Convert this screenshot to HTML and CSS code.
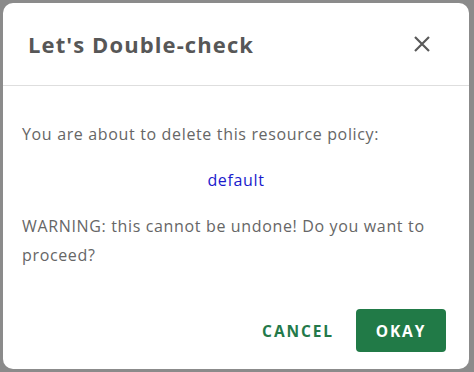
FILE: index.html
```html
<html>
<head>
	<link rel="stylesheet" href="styles.css">
</head>

<body>
	<div class="backdrop">
		<div class="dialog">
			<div class="dialog-header">
				<h1>Let's Double-check</h1>
				<button class="close-button" aria-label="Close">
					<svg width="18" height="18" viewBox="0 0 18 18">
						<path d="M2 2 L16 16 M16 2 L2 16" stroke="#5a5a5a" stroke-width="2.2" fill="none"/>
					</svg>
				</button>
			</div>

			<div class="dialog-body">
				<p>You are about to delete this resource policy:</p>
				<p class="target-name">default</p>
				<p>WARNING: this cannot be undone! Do you want to proceed?</p>
			</div>

			<div class="dialog-footer">
				<button class="text-button">Cancel</button>
				<button class="primary-button">Okay</button>
			</div>
		</div>
	</div>
</body>

</html>
```

FILE: styles.css
```css
html, body {
	margin: 0;
	padding: 0;
	height: 100%;
}

body {
	background: #8b8b8b;
	font-family: 'Open Sans', 'Noto Sans', sans-serif;
	overflow: hidden;
}

.backdrop {
	box-sizing: border-box;
	height: 100%;
	padding: 3px 5px 3px 3px;
	display: flex;
}

.dialog {
	flex: 1;
	background: #ffffff;
	border-radius: 10px;
	display: flex;
	flex-direction: column;
}

.dialog-header {
	height: 82px;
	display: flex;
	align-items: center;
	justify-content: space-between;
	padding: 0 38px 0 25px;
	border-bottom: 1px solid #dedede;
}

h1 {
	margin: 0;
	font-size: 22px;
	font-weight: 700;
	color: #575757;
	letter-spacing: 1.1px;
}

.close-button {
	background: none;
	border: none;
	padding: 0;
	width: 18px;
	height: 18px;
	cursor: pointer;
}

.close-button svg {
	display: block;
}

.dialog-body {
	padding: 34px 19px 0 19px;
	color: #666666;
	font-size: 16px;
	line-height: 29px;
	letter-spacing: 0.65px;
}

.dialog-body p {
	margin: 0 0 17px 0;
}

.target-name {
	text-align: center;
	color: #1a1acc;
}

.dialog-footer {
	margin-top: auto;
	display: flex;
	justify-content: flex-end;
	align-items: center;
	gap: 10px;
	padding: 0 23px 17px 0;
}

.text-button,
.primary-button {
	font-family: inherit;
	font-size: 15.5px;
	font-weight: 700;
	letter-spacing: 1.9px;
	text-transform: uppercase;
	border: none;
	border-radius: 4px;
	height: 43px;
	cursor: pointer;
}

.text-button {
	background: none;
	color: #23794a;
	padding: 0 12px;
}

.primary-button {
	background: #217a47;
	color: #ffffff;
	width: 90px;
}
```
